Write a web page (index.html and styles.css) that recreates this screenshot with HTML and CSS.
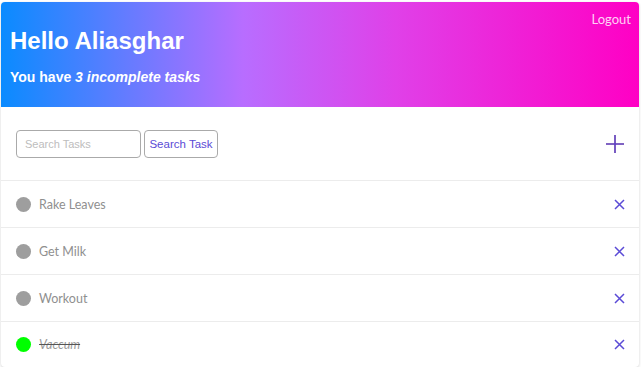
FILE: index.html
```html
<!DOCTYPE html>
<html>
<head>
<meta charset="utf-8">
<link rel="stylesheet" href="styles.css">
</head>
<body>
<div class="card">
  <header class="hero">
    <a class="logout">Logout</a>
    <h1 class="hello">Hello Aliasghar</h1>
    <p class="count">You have <em>3 incomplete tasks</em></p>
  </header>
  <div class="toolbar">
    <div class="search">
      <input class="search-input" type="text" placeholder="Search Tasks">
      <button class="search-btn">Search Task</button>
    </div>
    <svg class="plus" width="20" height="20" viewBox="0 0 20 20">
      <path d="M10 1V19M1 10H19" stroke="#5b3fc9" stroke-width="1.6" fill="none"/>
    </svg>
  </div>
  <ul class="tasks">
    <li class="task"><span class="dot"></span><span class="name">Rake Leaves</span><svg class="del" width="11" height="11" viewBox="0 0 11 11"><path d="M1 1L10 10M10 1L1 10" stroke="#5b4bd6" stroke-width="1.5"/></svg></li>
    <li class="task"><span class="dot"></span><span class="name">Get Milk</span><svg class="del" width="11" height="11" viewBox="0 0 11 11"><path d="M1 1L10 10M10 1L1 10" stroke="#5b4bd6" stroke-width="1.5"/></svg></li>
    <li class="task"><span class="dot"></span><span class="name">Workout</span><svg class="del" width="11" height="11" viewBox="0 0 11 11"><path d="M1 1L10 10M10 1L1 10" stroke="#5b4bd6" stroke-width="1.5"/></svg></li>
    <li class="task done"><span class="dot"></span><span class="name">Vaccum</span><svg class="del" width="11" height="11" viewBox="0 0 11 11"><path d="M1 1L10 10M10 1L1 10" stroke="#5b4bd6" stroke-width="1.5"/></svg></li>
  </ul>
</div>
</body>
</html>
```
FILE: styles.css
```css
* { box-sizing: border-box; }
html, body { margin: 0; padding: 0; background: #fff; }
body { padding: 2px 2px 0 1px; font-family: "Liberation Sans", Arial, sans-serif; }
.card {
  border-radius: 4px;
  box-shadow: 0 1px 3px rgba(0,0,0,0.18);
  overflow: hidden;
  background: #fff;
}
.hero {
  position: relative;
  height: 105px;
  padding: 24px 9px 0;
  background: linear-gradient(90deg, #0a8bff 0%, #b86dff 38%, #e040e8 62%, #ff00c4 100%);
  color: #fff;
}
.logout {
  position: absolute;
  top: 9px;
  right: 8px;
  font-family: Lato, "Open Sans", sans-serif;
  font-weight: 400;
  font-size: 13px;
  color: rgba(255,230,250,0.92);
}
.hello {
  margin: 0;
  font-size: 24px;
  line-height: 30px;
  font-weight: bold;
}
.count {
  margin: 12px 0 0;
  font-size: 14px;
  line-height: 18px;
  font-weight: bold;
}
.count em { font-style: italic; }
.toolbar {
  display: flex;
  align-items: center;
  justify-content: space-between;
  height: 74px;
  padding: 0 14px 0 15px;
  border-bottom: 1px solid #ececec;
}
.search { display: flex; gap: 3px; margin-top: 1px; }
.search-input {
  width: 125px;
  height: 28px;
  border: 1px solid #aaa;
  border-radius: 4px;
  padding: 0 8px;
  font-family: "Liberation Sans", Arial, sans-serif;
  font-size: 11px;
  outline: none;
}
.search-input::placeholder { color: #bdbdbd; }
.search-btn {
  height: 28px;
  width: 74px;
  padding: 0;
  border: 1px solid #aaa;
  border-radius: 4px;
  background: #fff;
  color: #5b4bd6;
  font-family: "Liberation Sans", Arial, sans-serif;
  font-size: 11.5px;
}
.plus { filter: drop-shadow(0.5px 0.5px 0 rgba(230,140,60,0.5)); }
.tasks { list-style: none; margin: 0; padding: 0; }
.task {
  display: flex;
  align-items: center;
  height: 47px;
  padding: 0 14px 0 15px;
  border-bottom: 1px solid #ececec;
}
.task:last-child { border-bottom: none; height: 45px; }
.dot {
  width: 15px;
  height: 15px;
  border-radius: 50%;
  background: #9e9e9e;
  flex: none;
}
.done .dot { background: #00ff00; }
.name {
  flex: 1;
  margin-left: 8px;
  font-family: Lato, "Open Sans", sans-serif;
  font-size: 12.5px;
  color: #8f8f8f;
}
.done .name {
  font-style: italic;
  text-decoration: line-through;
  color: #9a9a9a;
  text-decoration-color: #555;
}
```
